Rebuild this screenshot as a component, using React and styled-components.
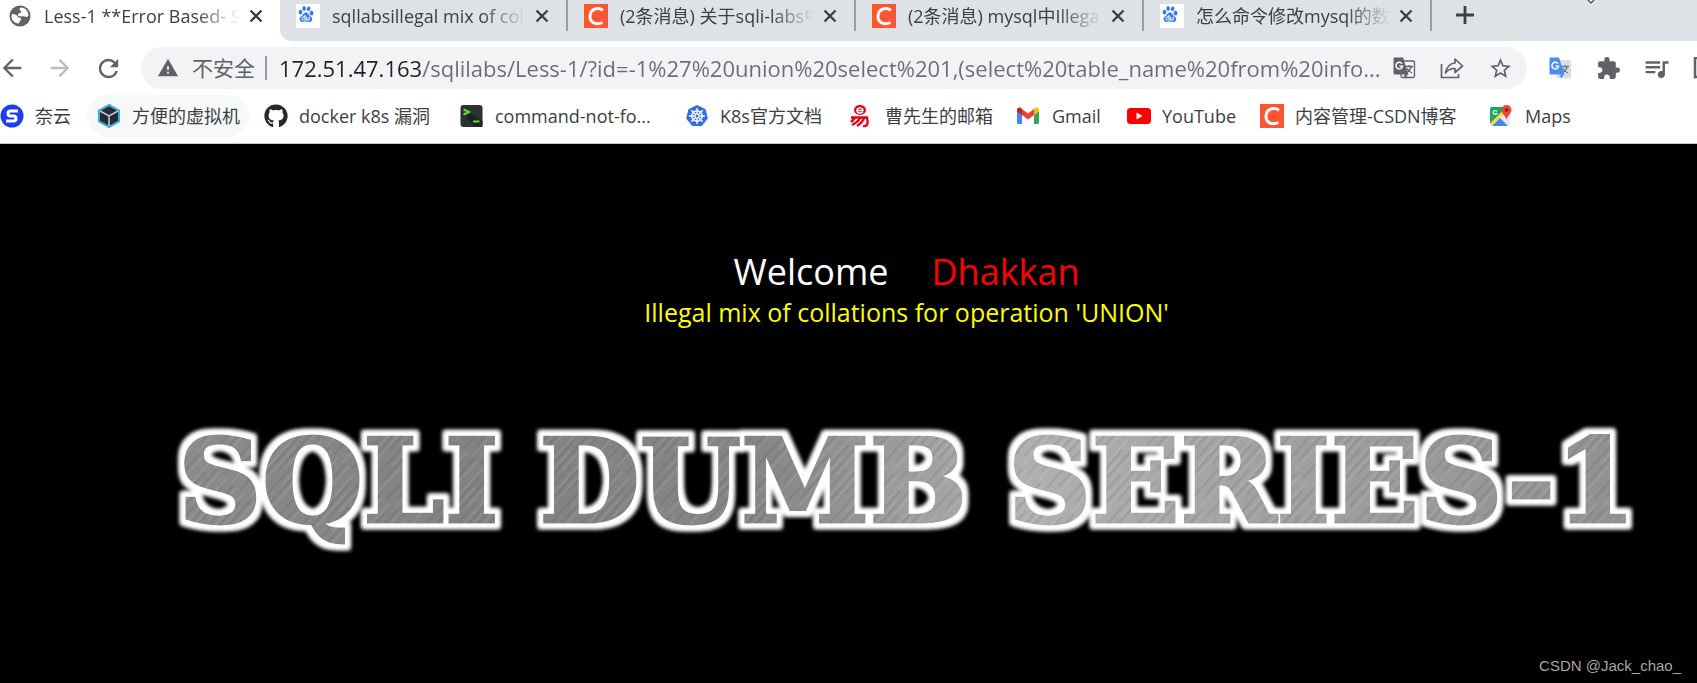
import React from "react";
import styled, { createGlobalStyle, css } from "styled-components";
import {
  MdArrowBack,
  MdArrowForward,
  MdRefresh,
  MdWarning,
  MdStarBorder,
  MdExtension,
  MdQueueMusic,
} from "react-icons/md";
import { FaGithub } from "react-icons/fa";
import { SiBaidu } from "react-icons/si";

const Global = createGlobalStyle`
  * { box-sizing: border-box; }
  body {
    margin: 0;
    background: #000;
    font-family: "Open Sans", "Noto Sans CJK SC", sans-serif;
    overflow: hidden;
  }
  button, input { font: inherit; border: 0; padding: 0; background: none; }
  button { display: flex; align-items: center; justify-content: center; cursor: pointer; }
`;

const Page = styled.div`
  min-height: 100vh;
  display: flex;
  flex-direction: column;
  overflow: hidden;
`;

const Chrome = styled.header`
  background: #fff;
  border-bottom: 1px solid #c8c8c8;
  color: #3c4043;
  overflow: hidden;
`;

const TabStrip = styled.div`
  display: flex;
  height: 41px;
  background: #fff;
`;

const InactiveTabs = styled.div`
  flex: 1;
  min-width: 0;
  display: flex;
  background: #dee1e6;
  border-bottom-left-radius: 12px;
`;

const Tab = styled.div`
  flex: 0 0 ${(p) => (p.$active ? 280 : 288)}px;
  min-width: 0;
  height: 31px;
  display: flex;
  align-items: flex-start;
  padding: 2px 12px 0 ${(p) => (p.$active ? 8 : 16)}px;
  ${(p) =>
    !p.$active &&
    css`
      border-right: 2px solid #9a9da1;
    `}
`;

const TabButton = styled.button`
  flex: 1;
  min-width: 0;
  height: 28px;
  gap: 12px;
  color: #3c4043;
  && {
    justify-content: flex-start;
  }
  svg {
    flex: none;
  }
`;

const TabTitle = styled.span`
  flex: 1;
  min-width: 0;
  overflow: hidden;
  white-space: nowrap;
  text-align: left;
  font-size: 18px;
  line-height: 28px;
  mask-image: linear-gradient(to right, #000 calc(100% - 44px), transparent);
`;

const TabClose = styled.button`
  flex: none;
  width: 24px;
  height: 28px;
  margin-left: 4px;
  color: #3c4043;
`;

const NewTab = styled.button`
  width: 66px;
  height: 30px;
  color: #3c4043;
`;

const TabSearch = styled.button`
  width: 24px;
  height: 4px;
  margin: 0 94px 0 auto;
`;

const Toolbar = styled.div`
  display: flex;
  align-items: center;
  height: 54px;
  margin: 0 -31px 0 -12px;
`;

const IconButton = styled.button`
  flex: none;
  width: 48px;
  height: 42px;
  color: ${(p) => (p.$faded ? "#b9bbbd" : "#5f6368")};
`;

const AddressBar = styled.div`
  flex: 1;
  min-width: 0;
  height: 42px;
  margin: 0 9px;
  padding: 0 3px 0 16px;
  display: flex;
  align-items: center;
  border-radius: 21px;
  background: #f1f3f4;
`;

const SiteInfo = styled.button`
  flex: none;
  gap: 13px;
  height: 24px;
  padding-right: 10px;
  border-right: 2px solid #9a9da1;
  color: #5f6368;
  font-size: 21px;
  line-height: 24px;
`;

const Url = styled.input`
  flex: 1;
  min-width: 0;
  height: 32px;
  margin: 0 -4px 0 12px;
  outline: none;
  font-size: 22px;
  && {
    color: transparent;
    background: linear-gradient(to right, #202124 144px, #6a6e72 144px);
    background-clip: text;
    -webkit-background-clip: text;
  }
`;

const Bookmarks = styled.nav`
  display: flex;
  gap: 5px;
  height: 48px;
  margin-left: -10px;
`;

const Bookmark = styled.a`
  flex: 0 0 ${(p) => p.$width}px;
  height: 42px;
  display: flex;
  align-items: center;
  gap: 11px;
  padding: 0 0 0 10px;
  border-radius: 21px;
  background: ${(p) => (p.$hovered ? "#f7f8f8" : "transparent")};
  color: #3c4043;
  font-size: 18px;
  line-height: 26px;
  white-space: nowrap;
  text-decoration: none;
  svg {
    flex: none;
  }
`;

const Content = styled.main`
  flex: 1;
  display: flex;
  flex-direction: column;
  background: #000;
  padding-top: 103px;
`;

const Lesson = styled.section`
  display: flex;
  flex-direction: column;
  align-items: center;
  padding-left: 116px;
`;

const Welcome = styled.h1`
  margin: 0;
  display: flex;
  gap: 43px;
  font-size: 36px;
  line-height: 50px;
  font-weight: 400;
  color: #fff;
`;

const Name = styled.span`
  color: #f00;
`;

const ErrorText = styled.p`
  margin: 0;
  font-size: 25px;
  line-height: 30px;
  color: #ff0;
`;

const Banner = styled.svg`
  width: 1500px;
  max-width: 100%;
  margin-top: 88px;
  overflow: visible;
`;

const BannerText = styled.text`
  font-family: "DejaVu Serif", serif;
  font-weight: 700;
  font-size: 116px;
  text-anchor: middle;
  fill: url(#brushed);
  stroke: url(#brushed);
  stroke-width: 3px;
  stroke-linejoin: miter;
  filter: url(#glow);
`;

const Watermark = styled.footer`
  margin-top: auto;
  padding: 0 16px 7px;
  text-align: right;
  font-family: "Liberation Sans", sans-serif;
  font-size: 15px;
  line-height: 20px;
  color: #a6a6a6;
`;

const Close = () => (
  <svg width="14" height="14" viewBox="0 0 14 14">
    <path d="M1.500 1.500l11 11M12.500 1.500l-11 11" stroke="currentColor" strokeWidth="2.400" />
  </svg>
);

const Plus = () => (
  <svg width="18" height="18" viewBox="0 0 18 18">
    <path d="M9 0v18M0 9h18" stroke="currentColor" strokeWidth="2.800" />
  </svg>
);

const Globe = () => (
  <svg width="24" height="24" viewBox="0 0 24 24">
    <circle cx="12" cy="12" r="10.500" fill="#5f6368" />
    <path
      d="M4 10c3 0 5 1 6 3 1 1 3 0 3 2s-2 2-2 4.500C6.500 19.500 3.500 16 3.500 12zM14 3.500c-3 0-3 3-1 3.500 1 .3 0 2-1.500 2.200C10 9.500 9 11 11 12c2 .8 4 0 5.500.5 2 .7 3.500.5 4-1C20 7 18 4.500 14 3.500z"
      fill="#fff"
    />
  </svg>
);

const Baidu = () => (
  <svg width="24" height="24" viewBox="0 0 24 24">
    <rect width="24" height="24" fill="#fff" />
    <SiBaidu x="2" y="2" width="20" height="20" color="#2b7cf6" />
  </svg>
);

const Csdn = () => (
  <svg width="24" height="24" viewBox="0 0 24 24">
    <rect width="24" height="24" fill="#fc5531" />
    <path d="M19 6.200C14 3 6 4.500 6 12.500c0 7 7 8.500 12.500 6" fill="none" stroke="#fff" strokeWidth="3" />
  </svg>
);

const Cloud = () => (
  <svg width="24" height="24" viewBox="0 0 24 24">
    <circle cx="12" cy="12" r="11.500" fill="#1f3df5" />
    <path
      d="M18 7h-7.500a2.500 2.500 0 0 0 0 5h3a2.500 2.500 0 0 1 0 5H6"
      fill="none"
      stroke="#fff"
      strokeWidth="3"
    />
  </svg>
);

const Cube = () => (
  <svg width="24" height="24" viewBox="0 0 24 24">
    <path d="M12 1l10 5.500v11L12 23 2 17.500v-11z" fill="#252b33" stroke="#3fa9dd" strokeWidth="2" />
    <path d="M3 7l9 5 9-5M12 12v10" fill="none" stroke="#c5ced5" strokeWidth="1.500" />
  </svg>
);

const Terminal = () => (
  <svg width="24" height="24" viewBox="0 0 24 24">
    <rect x="0.500" y="1" width="22" height="22" rx="3" fill="#2b3236" />
    <path d="M10 9l12.500 8v6H15l-9-9z" fill="#1d2225" />
    <path d="M3.500 5.500l5.500 2.500-5.500 2.500M13 17.500h6.500" fill="none" stroke="#5fe01c" strokeWidth="2" />
  </svg>
);

const Kubernetes = () => (
  <svg width="24" height="24" viewBox="0 0 24 24">
    <path d="M12 1l8.600 4.200 2.200 9.300-6 7.500H7.200l-6-7.500 2.200-9.300z" fill="#326ce5" />
    <g fill="none" stroke="#fff" strokeWidth="1.400">
      <circle cx="12" cy="12" r="5.200" />
      <path d="M12 4v16M4 12h16M6.300 6.300l11.400 11.400M17.700 6.300L6.300 17.700" />
    </g>
    <circle cx="12" cy="12" r="1.500" fill="#326ce5" />
  </svg>
);

const Netease = () => (
  <svg width="24" height="24" viewBox="0 0 24 24" fill="none" stroke="#e60012" strokeWidth="2.400">
    <ellipse cx="10" cy="6" rx="6" ry="5" fill="#e60012" stroke="none" />
    <path d="M7 6.500h6c0-3.500-6-3.500-6 0s4 2.500 6 1.500" stroke="#fff" strokeWidth="1.400" />
    <path d="M1 13.500h16c2 8-1 9-4 8.500M5 13c-1 3-3 4-4 5M10 14c-2 4-4 5-8 7M14 14c-1 4-4 6-7 8" />
  </svg>
);

const Gmail = () => (
  <svg width="24" height="24" viewBox="0 0 24 24">
    <path d="M0 6l5 4v10H1.500A1.500 1.500 0 0 1 0 18.500z" fill="#4285f4" />
    <path d="M22 6l-5 4v10h3.500a1.500 1.500 0 0 0 1.500-1.500z" fill="#34a853" />
    <path d="M5 5l6 4.500L17 5v6l-6 4.500L5 11z" fill="#ea4335" />
    <path d="M0 6c0-2.500 2.500-3 4-2l1 1v6L0 7.500z" fill="#c5221f" />
    <path d="M22 6c0-2.500-2.500-3-4-2l-1 1v6l5-3.500z" fill="#fbbc04" />
  </svg>
);

const Youtube = () => (
  <svg width="24" height="24" viewBox="0 0 24 24">
    <rect y="4" width="24" height="16" rx="3.500" fill="#f00" />
    <path d="M9.500 8.500v7l6-3.500z" fill="#fff" />
  </svg>
);

const Maps = () => (
  <svg width="24" height="24" viewBox="0 0 24 24">
    <rect x="0" y="3" width="20" height="19" rx="2" fill="#e8eaed" />
    <path d="M0 5a2 2 0 0 1 2-2h16L0 20z" fill="#1fa463" />
    <path d="M2 22l8-8 8 8z" fill="#4285f4" />
    <path d="M1 20.500L17.500 4" stroke="#fdd835" strokeWidth="3" />
    <path d="M7 7.500a2 2 0 1 0 0 2H5.300" fill="none" stroke="#fff" strokeWidth="1.200" />
    <path d="M16.500 1a5 5 0 0 1 5 5c0 4-4 5-5 10-1-5-5-6-5-10a5 5 0 0 1 5-5z" fill="#e8453c" />
    <circle cx="16.500" cy="6" r="1.800" fill="#8e1b16" />
  </svg>
);

const Translate = ({ front, edge, ink, page }) => (
  <svg width="24" height="24" viewBox="0 0 24 24">
    <rect x="9" y="5" width="13.500" height="16.500" rx="1.500" fill={page} stroke={edge} strokeWidth="1.300" />
    <path
      d="M13.500 10.500h7.500M17 9v1.500M19.500 10.500c-1 3.500-3 5-5 6.500M15 12.500c1 2 3 3.500 5 4.500"
      fill="none"
      stroke={ink}
      strokeWidth="1.300"
    />
    <path d="M2 1.500h9l5.500 17H3A1.500 1.500 0 0 1 1.500 17V3z" fill={front} />
    <path d="M12 18.500h4l-3 4z" fill={front} />
    <path d="M10 7.800a3.300 3.300 0 1 0 .5 2.500H7.500" fill="none" stroke="#fff" strokeWidth="1.500" />
  </svg>
);

const Share = () => (
  <svg width="24" height="24" viewBox="0 0 24 24" fill="none" stroke="#5f6368" strokeWidth="1.700">
    <path d="M1.500 8v13.500h17V18" />
    <path d="M15 3l7.500 7L15 16.500v-4c-5 0-7.500 1.500-9.500 4.500 1-5.500 4-9.500 9.500-10z" strokeLinejoin="round" />
  </svg>
);

const tabs = [
  { title: "sqllabsillegal mix of collations", icon: <Baidu /> },
  { title: "(2条消息) 关于sqli-labs中", icon: <Csdn /> },
  { title: "(2条消息) mysql中Illegal mix", icon: <Csdn /> },
  { title: "怎么命令修改mysql的数据", icon: <Baidu /> },
];

const bookmarks = [
  { label: "奈云", icon: <Cloud />, width: 92 },
  { label: "方便的虚拟机", icon: <Cube />, width: 162, hovered: true },
  { label: "docker k8s 漏洞", icon: <FaGithub size={24} color="#24292f" />, width: 191 },
  { label: "command-not-fo...", icon: <Terminal />, width: 220 },
  { label: "K8s官方文档", icon: <Kubernetes />, width: 160 },
  { label: "曹先生的邮箱", icon: <Netease />, width: 162 },
  { label: "Gmail", icon: <Gmail />, width: 105 },
  { label: "YouTube", icon: <Youtube />, width: 128 },
  { label: "内容管理-CSDN博客", icon: <Csdn />, width: 225 },
  { label: "Maps", icon: <Maps />, width: 110 },
];

const BrowserTab = ({ title, icon, active }) => (
  <Tab $active={active}>
    <TabButton>
      {icon}
      <TabTitle>{title}</TabTitle>
    </TabButton>
    <TabClose aria-label="关闭">
      <Close />
    </TabClose>
  </Tab>
);

export default function App() {
  return (
    <Page>
      <Global />
      <Chrome>
        <TabStrip>
          <BrowserTab active title="Less-1 **Error Based- String**" icon={<Globe />} />
          <InactiveTabs>
            {tabs.map((t) => (
              <BrowserTab key={t.title} {...t} />
            ))}
            <NewTab aria-label="新标签页">
              <Plus />
            </NewTab>
            <TabSearch aria-label="搜索标签页">
              <svg width="8" height="4" viewBox="0 0 8 4">
                <path d="M1 0l3 3 3-3" fill="#fff" stroke="#3c4043" strokeWidth="1.200" />
              </svg>
            </TabSearch>
          </InactiveTabs>
        </TabStrip>

        <Toolbar>
          <IconButton aria-label="后退"><MdArrowBack size={28} /></IconButton>
          <IconButton aria-label="前进" $faded><MdArrowForward size={28} /></IconButton>
          <IconButton aria-label="刷新"><MdRefresh size={29} /></IconButton>
          <AddressBar>
            <SiteInfo>
              <MdWarning size={22} />
              不安全
            </SiteInfo>
            <Url
              aria-label="地址"
              readOnly
              value="172.51.47.163/sqlilabs/Less-1/?id=-1%27%20union%20select%201,(select%20table_name%20from%20info..."
            />
            <IconButton aria-label="翻译">
              <Translate front="#5f6368" edge="#5f6368" ink="#5f6368" page="#f1f3f4" />
            </IconButton>
            <IconButton aria-label="分享"><Share /></IconButton>
            <IconButton aria-label="收藏"><MdStarBorder size={25} /></IconButton>
          </AddressBar>
          <IconButton aria-label="Google 翻译">
            <Translate front="#4c8bf5" edge="#d5d8dc" ink="#607d8b" page="#dcdfe2" />
          </IconButton>
          <IconButton aria-label="扩展程序"><MdExtension size={25} /></IconButton>
          <IconButton aria-label="媒体控制"><MdQueueMusic size={29} /></IconButton>
          <IconButton aria-label="侧边栏">
            <svg width="22" height="22" viewBox="0 0 22 22">
              <rect x="2" y="1" width="18" height="19" fill="none" stroke="#5f6368" strokeWidth="2.500" />
            </svg>
          </IconButton>
        </Toolbar>

        <Bookmarks>
          {bookmarks.map((b) => (
            <Bookmark key={b.label} href="#" $width={b.width} $hovered={b.hovered}>
              {b.icon}
              {b.label}
            </Bookmark>
          ))}
        </Bookmarks>
      </Chrome>

      <Content>
        <Lesson>
          <Welcome>
            Welcome <Name>Dhakkan</Name>
          </Welcome>
          <ErrorText>Illegal mix of collations for operation 'UNION'</ErrorText>
          <Banner viewBox="0 0 1500 140">
            <defs>
              <linearGradient id="steel" x1="0" y1="0" x2="1500" y2="60" gradientUnits="userSpaceOnUse">
                <stop offset="0" stopColor="#8c8c8c" />
                <stop offset="0.2" stopColor="#828282" />
                <stop offset="0.4" stopColor="#858585" />
                <stop offset="0.58" stopColor="#b0b0b0" />
                <stop offset="0.75" stopColor="#a0a0a0" />
                <stop offset="1" stopColor="#8f8f8f" />
              </linearGradient>
              <pattern id="brushed" width="1500" height="140" patternUnits="userSpaceOnUse">
                <rect width="1500" height="140" fill="url(#steel)" />
                <rect width="1500" height="140" fill="url(#scratches)" />
              </pattern>
              <pattern
                id="scratches"
                width="23"
                height="90"
                patternUnits="userSpaceOnUse"
                patternTransform="rotate(42)"
              >
                <path d="M2 0v60M9 20v70M16 0v40" stroke="#fff" strokeOpacity="0.160" />
                <path d="M5 10v70M12 0v50M20 30v60" stroke="#000" strokeOpacity="0.140" />
              </pattern>
              <filter id="glow" x="-20" y="-20" width="1540" height="180" filterUnits="userSpaceOnUse">
                <feMorphology in="SourceAlpha" operator="dilate" radius="5" result="wide" />
                <feGaussianBlur in="wide" stdDeviation="2" result="soft" />
                <feFlood floodColor="#fff" />
                <feComposite in2="soft" operator="in" result="halo" />
                <feMerge>
                  <feMergeNode in="halo" />
                  <feMergeNode in="halo" />
                  <feMergeNode in="SourceGraphic" />
                </feMerge>
              </filter>
            </defs>
            <BannerText x="750" y="107">
              SQLI DUMB SERIES-1
            </BannerText>
          </Banner>
        </Lesson>
        <Watermark>CSDN @Jack_chao_</Watermark>
      </Content>
    </Page>
  );
}
